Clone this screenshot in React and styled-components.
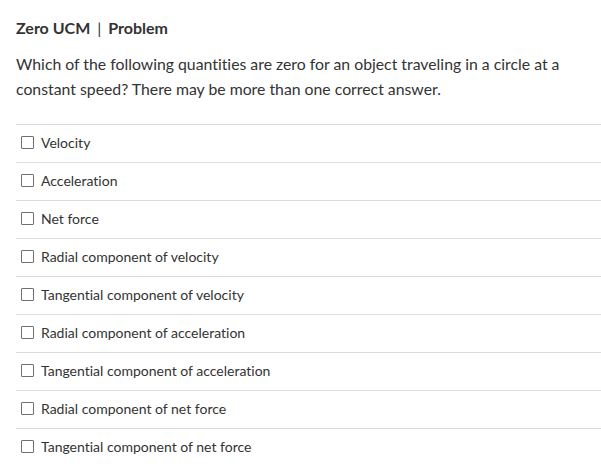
import React from "react";
import styled, { createGlobalStyle } from "styled-components";

const Global = createGlobalStyle`
  html, body { margin: 0; padding: 0; background: #fff; }
  body {
    font-family: Lato, "Noto Sans", sans-serif;
    color: #333;
    font-variant-ligatures: none;
  }
`;

const Page = styled.div`
  padding: 18px 0 0 16px;
  width: 585px;
`;

const Title = styled.h1`
  margin: 0;
  font-size: 16px;
  line-height: 20px;
  font-weight: 700;
  color: #333;
`;

const Sep = styled.span`
  font-weight: 400;
  margin: 0 7px;
`;

const Question = styled.p`
  margin: 13px 0 0;
  font-size: 15.8px;
  line-height: 25px;
  color: #333;
`;

const List = styled.ul`
  list-style: none;
  margin: 23px 0 0;
  padding: 0;
`;

const Item = styled.li`
  box-sizing: border-box;
  display: flex;
  align-items: center;
  gap: 7px;
  height: 38px;
  padding: 0 0 2px 5px;
  border-top: 1px solid #dcdcdc;
  font-size: 14px;
  color: #333;
`;

const Box = styled.span`
  width: 11px;
  height: 11px;
  border: 1px solid #707070;
  border-radius: 1px;
  flex: none;
`;

const options = [
  "Velocity",
  "Acceleration",
  "Net force",
  "Radial component of velocity",
  "Tangential component of velocity",
  "Radial component of acceleration",
  "Tangential component of acceleration",
  "Radial component of net force",
  "Tangential component of net force",
];

export default function App() {
  return (
    <>
      <Global />
      <Page>
        <Title>
          Zero UCM<Sep>|</Sep>Problem
        </Title>
        <Question>
          Which of the following quantities are zero for an object traveling in a circle at a constant speed? There may be more than one correct answer.
        </Question>
        <List>
          {options.map((o) => (
            <Item key={o}>
              <Box />
              {o}
            </Item>
          ))}
        </List>
      </Page>
    </>
  );
}
